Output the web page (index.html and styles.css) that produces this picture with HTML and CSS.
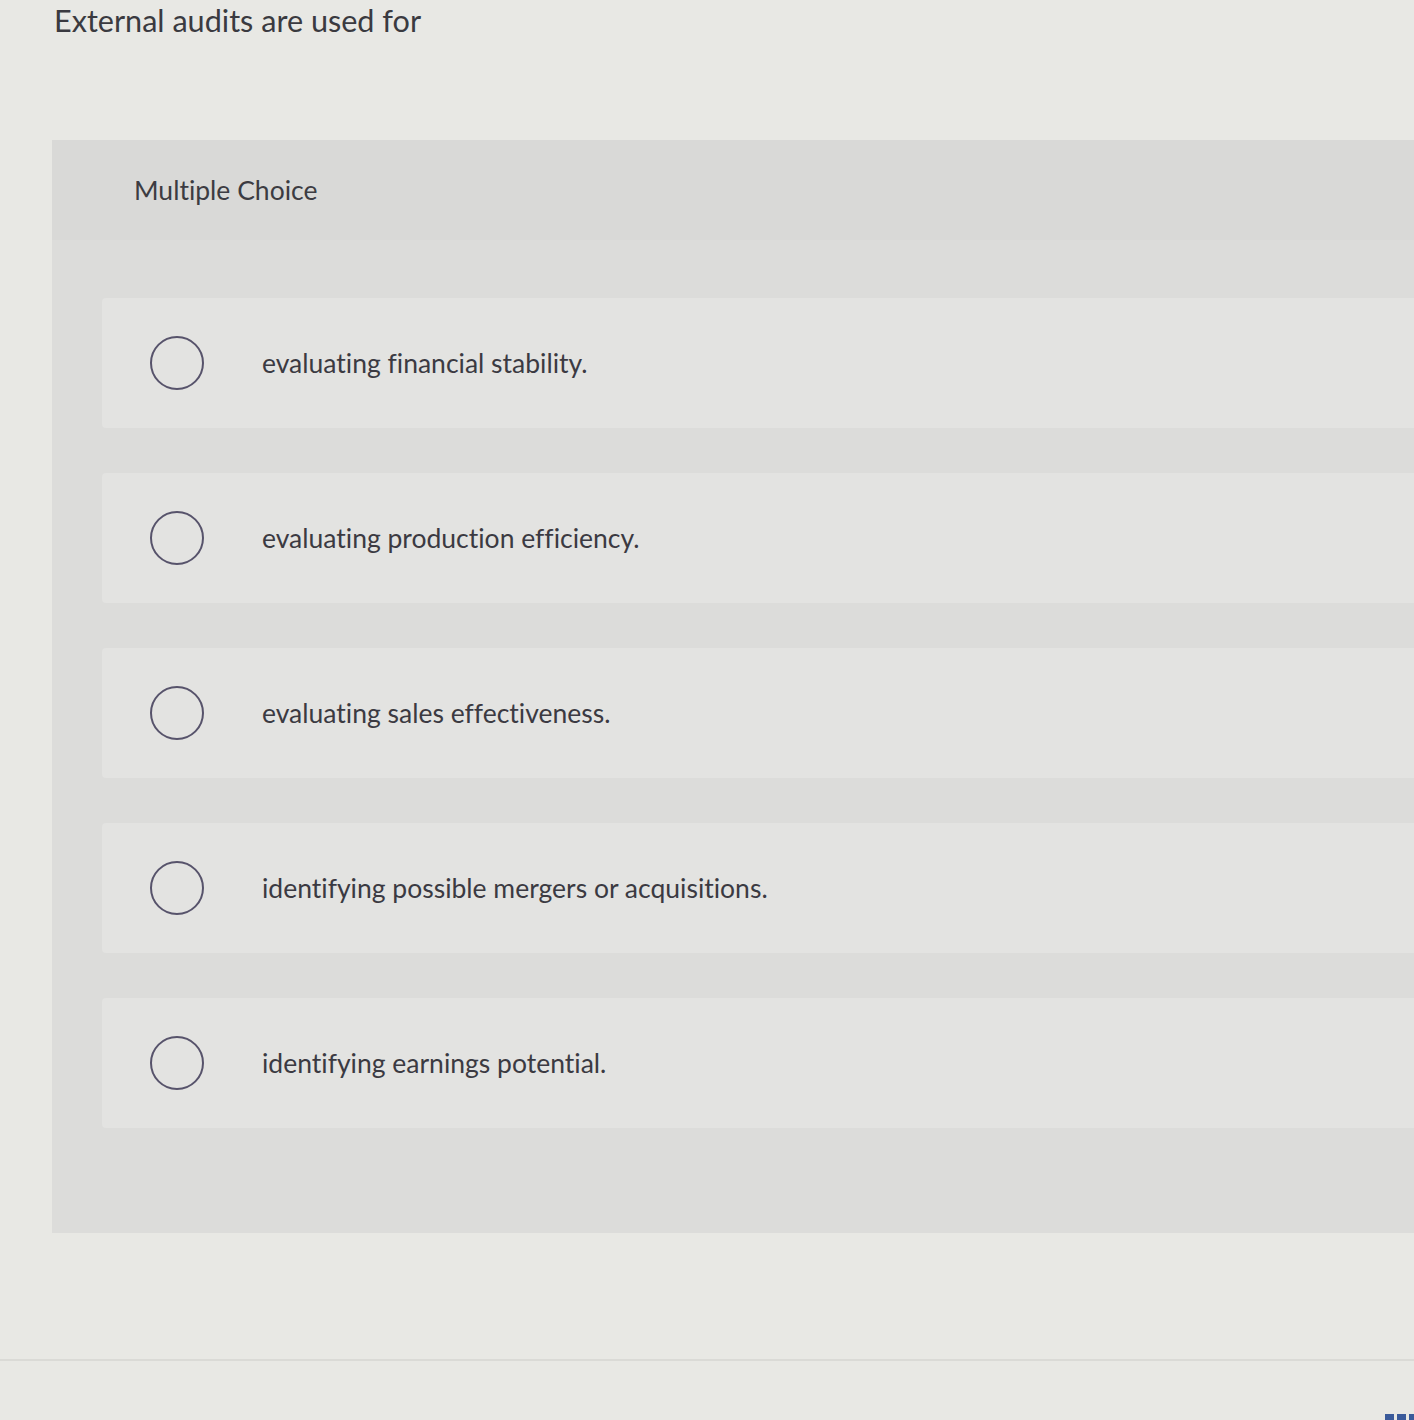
FILE: index.html
```html
<!DOCTYPE html>
<html lang="en">
<head>
    <meta charset="UTF-8">
    <meta name="viewport" content="width=device-width, initial-scale=1.0">
    <title>External audits</title>
    <link rel="stylesheet" href="styles.css">
</head>
<body>
    <div class="page">
        <p class="question">External audits are used for</p>

        <!-- Multiple choice panel -->
        <div class="panel">
            <div class="panel-header">Multiple Choice</div>
            <div class="options">
                <label class="option">
                    <span class="radio"></span>
                    <span class="option-text">evaluating financial stability.</span>
                </label>
                <label class="option">
                    <span class="radio"></span>
                    <span class="option-text">evaluating production efficiency.</span>
                </label>
                <label class="option">
                    <span class="radio"></span>
                    <span class="option-text">evaluating sales effectiveness.</span>
                </label>
                <label class="option">
                    <span class="radio"></span>
                    <span class="option-text">identifying possible mergers or acquisitions.</span>
                </label>
                <label class="option">
                    <span class="radio"></span>
                    <span class="option-text">identifying earnings potential.</span>
                </label>
            </div>
        </div>

        <div class="footer">
            <div class="footer-icons">
                <span class="dot"></span><span class="dot"></span><span class="dot"></span>
            </div>
        </div>
    </div>
</body>
</html>
```

FILE: styles.css
```css
html, body {
    margin: 0;
    padding: 0;
}
body {
    font-family: Lato, "Open Sans", Arial, sans-serif;
    font-variant-ligatures: none;
    background-color: #e8e8e4;
    color: #3b3a40;
    overflow: hidden;
}
.page {
    width: 1414px;
    height: 1420px;
    display: flex;
    flex-direction: column;
}
.question {
    margin: 0;
    padding: 3px 0 0 54px;
    font-size: 30.6px;
    line-height: 36px;
    color: #3a3a40;
}
.panel {
    margin: 101px -20px 0 52px;
    background-color: #dcdcda;
    padding-bottom: 105px;
}
.panel-header {
    height: 100px;
    padding-left: 82px;
    display: flex;
    align-items: center;
    font-size: 26.5px;
    color: #3c3c42;
    background-color: #d9d9d7;
}
.options {
    display: flex;
    flex-direction: column;
    gap: 45px;
    padding: 58px 0 0 50px;
}
.option {
    height: 130px;
    display: flex;
    align-items: center;
    background-color: #e3e3e1;
    border-radius: 4px;
    padding-left: 48px;
}
.radio {
    width: 50px;
    height: 50px;
    border: 2px solid #57536b;
    border-radius: 50%;
    flex-shrink: 0;
}
.option-text {
    margin-left: 58px;
    font-size: 26.5px;
    color: #3b3a42;
}
.footer {
    margin-top: 126px;
    border-top: 2px solid #dadad6;
    flex: 1;
    position: relative;
}
.footer-icons {
    position: absolute;
    right: -4px;
    bottom: 0;
    display: flex;
    gap: 3px;
}
.dot {
    width: 9px;
    height: 6px;
    background-color: #3a5a9a;
}
```
